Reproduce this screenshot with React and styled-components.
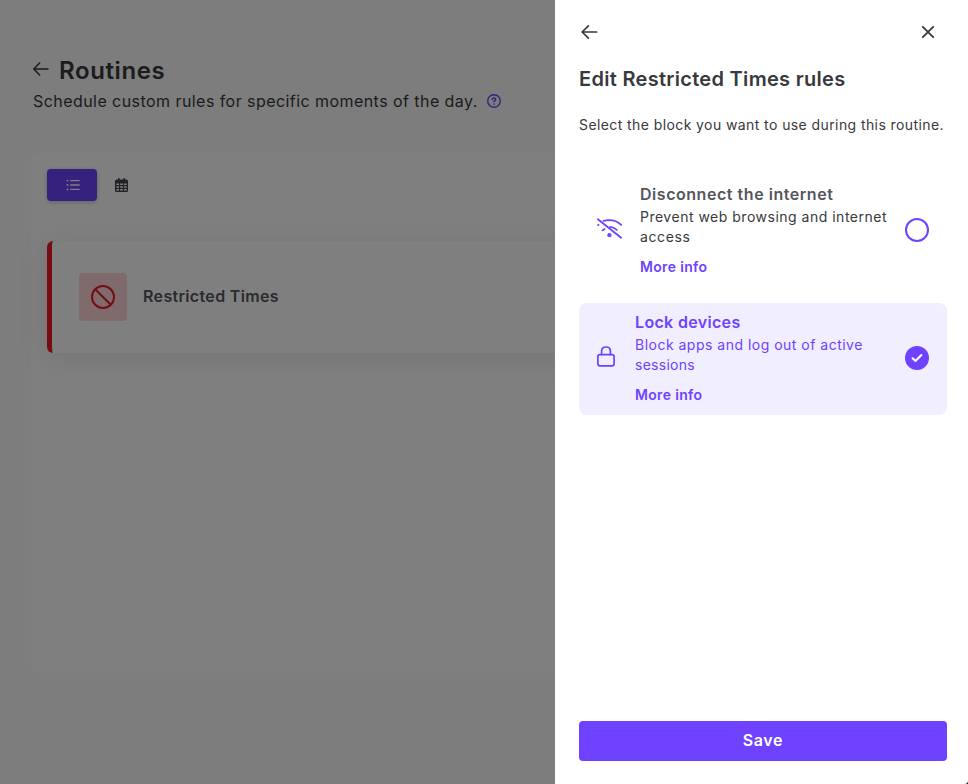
import React from "react";
import styled, { createGlobalStyle, css } from "styled-components";

const Global = createGlobalStyle`
  *, *::before, *::after { box-sizing: border-box; }
  body { margin: 0; background: #222; font-family: Inter, "Open Sans", sans-serif; color: #38393d; }
  h1, h2, h3, p { margin: 0; }
  button { font: inherit; border: 0; padding: 0; background: none; color: inherit; }
  svg { display: block; flex: none; }
`;

const Frame = styled.div`
  position: relative;
  width: 968px;
  height: 784px;
  overflow: hidden;
  border-bottom-right-radius: 4px;
  background: #fafafa;
`;

const Page = styled.main`
  padding: 53px 0 0 31px;
`;

const TitleRow = styled.div`
  display: flex;
  align-items: center;
  height: 36px;
  gap: 9px;
`;

const BackLink = styled.div`
  margin-bottom: 4px;
`;

const PageTitle = styled.h1`
  font-size: 24px;
  font-weight: 600;
  line-height: 36px;
  white-space: nowrap;
  letter-spacing: ${(p) => p.$track}px;
`;

const Intro = styled.div`
  display: flex;
  align-items: center;
  gap: 10px;
  height: 24px;
  padding-left: 2px;
  padding-bottom: 1px;
`;

const IntroText = styled.p`
  font-size: 16px;
  line-height: 24px;
  width: 444px;
  white-space: nowrap;
  letter-spacing: ${(p) => p.$track}px;
`;

const Board = styled.section`
  margin-top: 40px;
  height: 520px;
  padding: 16px;
  background: #fff;
  border-radius: 8px 0 0 8px;
`;

const Tabs = styled.div`
  display: flex;
`;

const Tab = styled.button`
  display: grid;
  place-items: center;
  width: ${(p) => (p.$active ? 50 : 48)}px;
  height: 32px;
  border-radius: 4px;
  ${(p) => p.$active && css`
    padding-left: 1px;
    background: #6e42ff;
    color: #fff;
    box-shadow: 0 1px 4px rgba(0, 0, 0, 0.25);
  `}
`;

const RoutineCard = styled.article`
  display: flex;
  align-items: center;
  gap: 16px;
  height: 112px;
  margin-top: 40px;
  padding-left: 27px;
  background: #fff;
  border-left: 5px solid #ef1824;
  border-radius: 6px;
  box-shadow: 0 4px 32px rgba(40, 40, 70, 0.1);
`;

const RoutineIcon = styled.div`
  display: grid;
  place-items: center;
  width: 48px;
  height: 48px;
  border-radius: 4px;
  background: #ffd4d8;
`;

const Overlay = styled.div`
  position: absolute;
  inset: 0;
  display: flex;
  justify-content: flex-end;
  background: rgba(0, 0, 0, 0.5);
`;

const Drawer = styled.aside`
  display: flex;
  flex-direction: column;
  width: 413px;
  padding: 20px 21px 23px 24px;
  background: #fff;
`;

const DrawerBar = styled.div`
  display: flex;
  justify-content: space-between;
  height: 24px;
  padding-right: 7px;
`;

const DrawerTitle = styled.h2`
  margin-top: 20px;
  font-size: 20px;
  font-weight: 600;
  line-height: 30px;
  white-space: nowrap;
  letter-spacing: ${(p) => p.$track}px;
`;

const DrawerText = styled.p`
  margin-top: 21px;
  font-size: 14px;
  line-height: 20px;
  white-space: nowrap;
  letter-spacing: ${(p) => p.$track}px;
`;

const Options = styled.div`
  display: flex;
  flex-direction: column;
  gap: 16px;
  margin-top: 40px;
`;

const Option = styled.div`
  display: flex;
  align-items: center;
  height: 112px;
  padding: 0 18px;
  border-radius: 8px;
  color: ${(p) => (p.$selected ? "#6e42ff" : "#38393d")};
  background: ${(p) => (p.$selected ? "#f1eeff" : "transparent")};
`;

const OptionIcon = styled.div`
  width: ${(p) => p.$width}px;
  margin-right: ${(p) => p.$gap}px;
  margin-top: -5px;
  color: #6e42ff;
`;

const OptionBody = styled.div`
  flex: 1;
  height: 96px;
`;

const Heading = styled.h3`
  padding-bottom: 2px;
  font-size: 16px;
  font-weight: 600;
  line-height: 22px;
  white-space: nowrap;
  color: ${(p) => (p.$accent ? "#6e42ff" : "#55565e")};
  letter-spacing: ${(p) => p.$track}px;
`;

const OptionText = styled.p`
  font-size: 14px;
  line-height: 20px;
  white-space: nowrap;
  letter-spacing: ${(p) => p.$track}px;
`;

const MoreInfo = styled.button`
  display: block;
  margin-top: 10px;
  font-size: 14px;
  font-weight: 600;
  line-height: 20px;
  color: #6e42ff;
  letter-spacing: ${(p) => p.$track}px;
`;

const Radio = styled.div`
  display: grid;
  place-items: center;
  width: 24px;
  height: 24px;
  margin-top: -2px;
  border: 2px solid #6e42ff;
  border-radius: 50%;
  color: #fff;
  background: ${(p) => (p.$checked ? "#6e42ff" : "#fff")};
`;

const SaveButton = styled.button`
  margin-top: auto;
  height: 40px;
  padding-bottom: 2px;
  border-radius: 4px;
  background: #6e42ff;
  color: #fff;
  font-size: 16px;
  font-weight: 600;
  letter-spacing: ${(p) => p.$track}px;
`;

const Stroke = ({ w, h, sw = 2, color = "currentColor", children }) => (
  <svg width={w} height={h} viewBox={`0 0 ${w} ${h}`} fill="none" stroke={color} strokeWidth={sw} strokeLinecap="round" strokeLinejoin="round">
    {children}
  </svg>
);

const ArrowLeft = () => (
  <Stroke w={19} h={24} sw={1.7}>
    <path d="M17.6 12H3.4M9.4 5.8L3.1 12L9.4 18.2" />
  </Stroke>
);

const BackArrow = () => (
  <Stroke w={19} h={24} sw={1.6}>
    <path d="M17 12H3M8.6 6L2.8 12L8.6 18" />
  </Stroke>
);

const CloseIcon = () => (
  <Stroke w={24} h={24} sw={1.8}>
    <path d="M6.8 6.8L17.2 17.2M17.2 6.8L6.8 17.2" />
  </Stroke>
);

const HelpIcon = () => (
  <Stroke w={14} h={14} sw={1.4} color="#6e42ff">
    <circle cx="7" cy="7" r="6.3" />
    <path d="M5.2 5.5C5.3 4.4 6 4 7 4C8.1 4 8.8 4.6 8.8 5.5C8.8 6.6 7 6.7 7 7.8" />
    <path d="M7 10V10.1" strokeWidth="1.6" />
  </Stroke>
);

const ListIcon = () => (
  <Stroke w={14} h={12} sw={1.3}>
    <path d="M4.7 1.6H13.2M4.7 6H13.2M4.7 10.4H13.2" />
    <path d="M1.5 1.6H1.6M1.5 6H1.6M1.5 10.4H1.6" strokeWidth="1.8" />
  </Stroke>
);

const CalendarIcon = () => (
  <svg width="13" height="14" viewBox="0 0 13 14" fill="#45474e">
    <path fillRule="evenodd" d="M3 0H4.5V1.5H8.5V0H10V1.5H11.5Q13 1.5 13 3V12.5Q13 14 11.5 14H1.5Q0 14 0 12.5V3Q0 1.5 1.5 1.5H3ZM1.4 5.4V7H4V5.4ZM5.2 5.4V7H7.8V5.4ZM9 5.4V7H11.6V5.4ZM1.4 8.2V9.8H4V8.2ZM5.2 8.2V9.8H7.8V8.2ZM9 8.2V9.8H11.6V8.2ZM1.4 11V12.5H4V11ZM5.2 11V12.5H7.8V11ZM9 11V12.5H11.6V11Z" />
  </svg>
);

const BanIcon = () => (
  <svg width="24" height="24" viewBox="0 0 24 24" fill="none" stroke="#e81b28" strokeWidth="2">
    <circle cx="12" cy="12" r="11" />
    <path d="M4.2 4.2L19.8 19.8" />
  </svg>
);

const WifiOffIcon = () => (
  <Stroke w={26} h={21} sw={1.8}>
    <path d="M0.9 1.2L24.1 19.8" />
    <path d="M6.5 2.9C13 1.3 19.5 2.6 24.2 6.8" />
    <path d="M13.2 8.8C15.8 9 17.8 10 19.8 11.8" />
    <path d="M1.1 7.1L1.5 6.8M5.6 12.4L7.5 11.1" />
    <circle cx="12.4" cy="17.2" r="2.1" fill="currentColor" stroke="none" />
  </Stroke>
);

const LockIcon = () => (
  <Stroke w={18} h={21} sw={1.7}>
    <rect x="0.9" y="8.6" width="16.2" height="11.2" rx="2" />
    <path d="M4.6 8.4V5.2Q4.6 1 9 1Q13.4 1 13.4 5.2V8.4" />
  </Stroke>
);

const CheckIcon = () => (
  <Stroke w={12} h={10} sw={2}>
    <path d="M1.6 5.2L4.5 8L10.4 2" />
  </Stroke>
);

const options = [
  {
    title: "Disconnect the internet", titleTrack: 0.54,
    lines: [["Prevent web browsing and internet", 0.5], ["access", 0.6]],
    Icon: WifiOffIcon, width: 26, gap: 17,
  },
  {
    title: "Lock devices", titleTrack: 0.33,
    lines: [["Block apps and log out of active", 0.49], ["sessions", 0.28]],
    Icon: LockIcon, width: 18, gap: 20, selected: true,
  },
];

export default function App() {
  return (
    <>
      <Global />
      <Frame>
        <Page>
          <TitleRow>
            <BackLink><BackArrow /></BackLink>
            <PageTitle $track={0.6}>Routines</PageTitle>
          </TitleRow>
          <Intro>
            <IntroText $track={0.44}>Schedule custom rules for specific moments of the day.</IntroText>
            <HelpIcon />
          </Intro>
          <Board>
            <Tabs>
              <Tab $active><ListIcon /></Tab>
              <Tab><CalendarIcon /></Tab>
            </Tabs>
            <RoutineCard>
              <RoutineIcon><BanIcon /></RoutineIcon>
              <Heading $track={0.34}>Restricted Times</Heading>
            </RoutineCard>
          </Board>
        </Page>
        <Overlay>
          <Drawer>
            <DrawerBar>
              <ArrowLeft />
              <CloseIcon />
            </DrawerBar>
            <DrawerTitle $track={0.3}>Edit Restricted Times rules</DrawerTitle>
            <DrawerText $track={0.41}>Select the block you want to use during this routine.</DrawerText>
            <Options>
              {options.map(({ title, titleTrack, lines, Icon, width, gap, selected }) => (
                <Option key={title} $selected={selected}>
                  <OptionIcon $width={width} $gap={gap}><Icon /></OptionIcon>
                  <OptionBody>
                    <Heading $accent={selected} $track={titleTrack}>{title}</Heading>
                    {lines.map(([text, track]) => (
                      <OptionText key={text} $track={track}>{text}</OptionText>
                    ))}
                    <MoreInfo $track={0.33}>More info</MoreInfo>
                  </OptionBody>
                  <Radio $checked={selected}>{selected && <CheckIcon />}</Radio>
                </Option>
              ))}
            </Options>
            <SaveButton $track={0.6}>Save</SaveButton>
          </Drawer>
        </Overlay>
      </Frame>
    </>
  );
}
